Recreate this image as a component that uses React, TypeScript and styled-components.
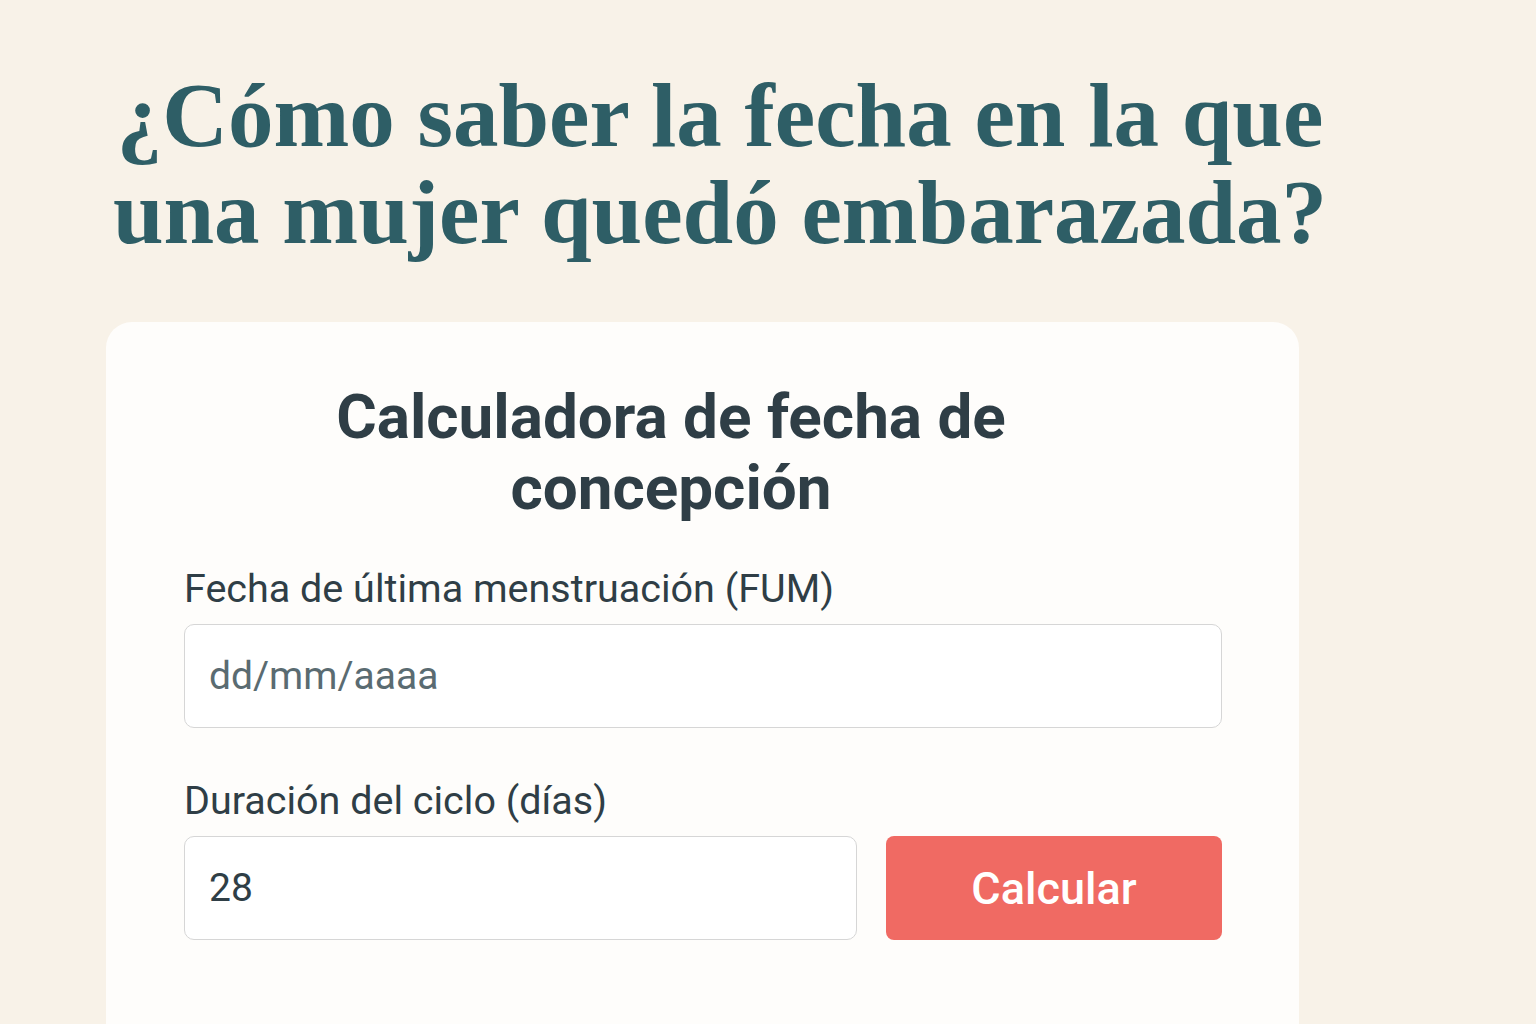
import React from "react";
import styled, { createGlobalStyle } from "styled-components";

const Global = createGlobalStyle`
  html, body { margin: 0; padding: 0; background: #f8f2e8; }
  body { font-family: Roboto, "Noto Sans", sans-serif; }
  * { box-sizing: border-box; }
`;

const Page = styled.div`
  height: 1024px;
  overflow: hidden;
  padding: 67px 0 0 106px;
  background: #f8f2e8;
`;

const Heading = styled.h1`
  margin: 0;
  width: 1228px;
  text-align: center;
  font-family: "Liberation Serif", "DejaVu Serif", serif;
  font-weight: 700;
  font-size: 91px;
  line-height: 97px;
  color: #2e5e66;
`;

const Card = styled.section`
  margin-top: 61px;
  width: 1193px;
  min-height: 760px;
  background: #fefdfb;
  border-radius: 26px;
  padding: 59px 77px 0 78px;
`;

const CardTitle = styled.h2`
  margin: 0 0 42px 107px;
  width: 760px;
  text-align: center;
  font-family: Roboto, "Noto Sans", sans-serif;
  font-weight: 700;
  font-size: 62px;
  line-height: 71px;
  color: #2f3e46;
`;

const Field = styled.div`
  display: flex;
  flex-direction: column;
  gap: 11px;
  margin-bottom: 49px;
`;

const Label = styled.label`
  font-family: Roboto, "Noto Sans", sans-serif;
  font-size: 39.5px;
  line-height: 48px;
  color: #2f3e46;
`;

const Row = styled.div`
  display: flex;
  gap: 29px;
`;

const Input = styled.input<{ $grow?: boolean }>`
  width: ${(p) => (p.$grow ? "673px" : "100%")};
  height: 104px;
  border: 1.5px solid #d6d6d6;
  border-radius: 10px;
  background: #ffffff;
  padding: 0 24px;
  font-family: Roboto, "Noto Sans", sans-serif;
  font-size: 39px;
  color: #2f3e46;
  outline: none;
  &::placeholder {
    color: #5a6b71;
  }
`;

const Button = styled.button`
  flex: 1;
  height: 104px;
  border: none;
  border-radius: 8px;
  background: #f06a63;
  color: #ffffff;
  font-family: Roboto, "Noto Sans", sans-serif;
  font-weight: 500;
  font-size: 45px;
  cursor: pointer;
`;

export default function App() {
  return (
    <>
      <Global />
      <Page>
        <Heading>¿Cómo saber la fecha en la que una mujer quedó embarazada?</Heading>
        <Card>
          <CardTitle>Calculadora de fecha de concepción</CardTitle>
          <Field>
            <Label>Fecha de última menstruación (FUM)</Label>
            <Input placeholder="dd/mm/aaaa" />
          </Field>
          <Field>
            <Label>Duración del ciclo (días)</Label>
            <Row>
              <Input $grow defaultValue="28" />
              <Button>Calcular</Button>
            </Row>
          </Field>
        </Card>
      </Page>
    </>
  );
}
